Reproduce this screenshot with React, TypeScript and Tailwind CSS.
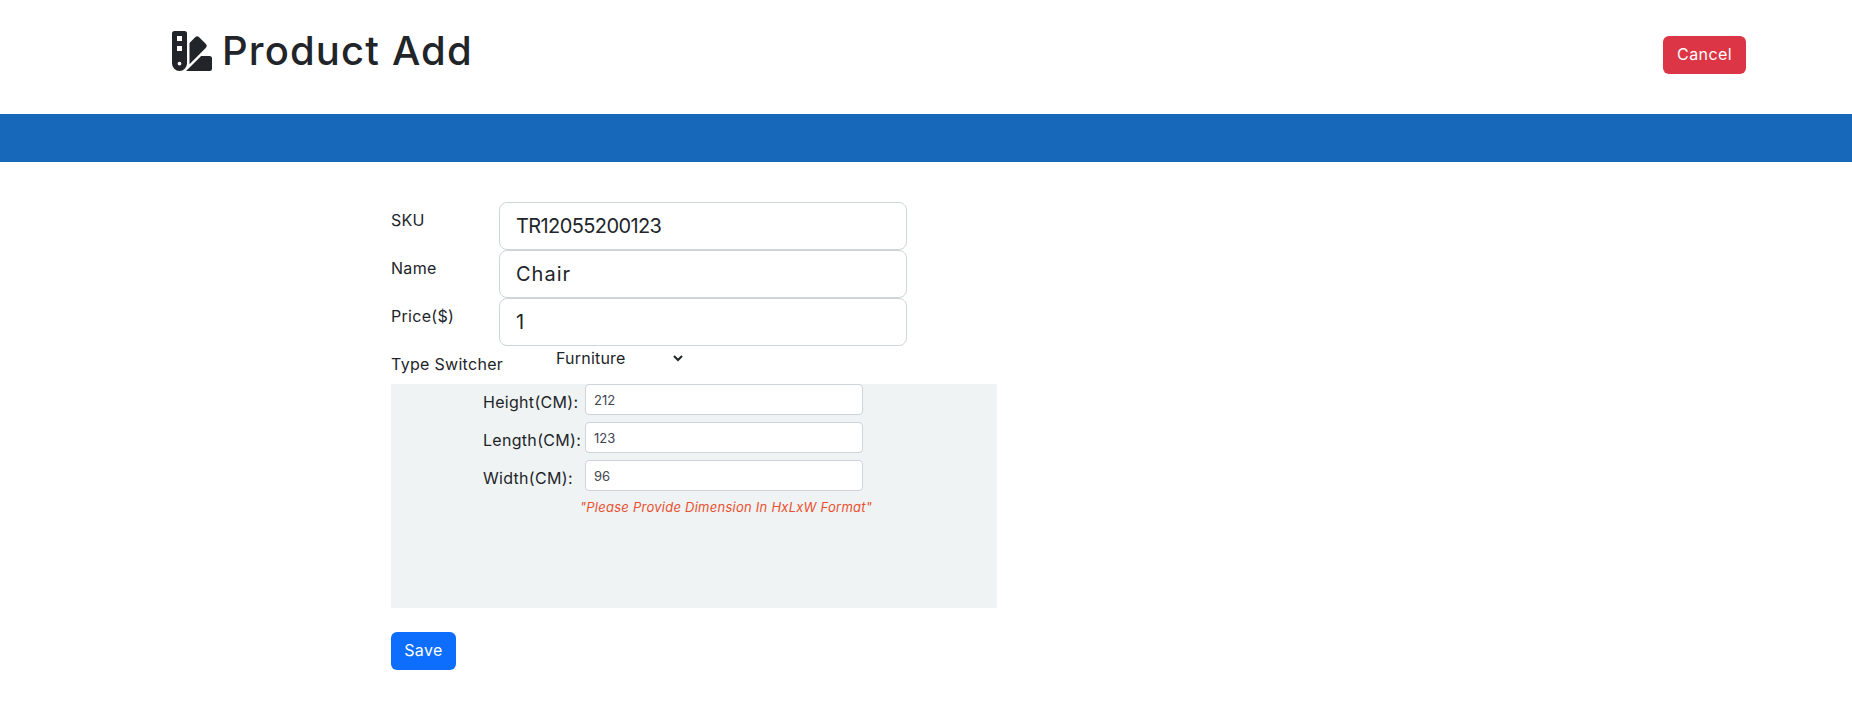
import { FaSwatchbook } from "react-icons/fa";

const fields = [
  { label: "SKU", value: "TR12055200123", spacing: "tracking-[-0.6px]" },
  { label: "Name", value: "Chair", spacing: "tracking-[1px]" },
  { label: "Price($)", value: "1", spacing: "" },
];

const dimensions = [
  { label: "Height(CM):", value: "212" },
  { label: "Length(CM):", value: "123" },
  { label: "Width(CM):", value: "96" },
];

export default function App() {
  return (
    <div className="min-h-[702px] bg-white font-['Inter',sans-serif] text-[#212529]">
      {/* Header */}
      <header className="flex h-[114px] justify-between pl-[172px] pr-[106px]">
        <div className="flex h-[102px] items-center gap-[10px]">
          <FaSwatchbook className="text-[40px]" />
          <h1 className="text-[40px] font-[450] tracking-[1.15px]">Product Add</h1>
        </div>
        <button className="mt-9 h-[38px] w-[83px] rounded-md bg-[#dc3545] pb-[2px] text-[16px] tracking-[0.4px] text-white">Cancel</button>
      </header>
      <div className="h-[48px] bg-[#1767bb]" />

      {/* Form */}
      <form className="w-[997px] pl-[391px] pt-10">
        {fields.map((f) => (
          <div key={f.label} className="flex h-[48px]">
            <label className="w-[108px] pt-[8px] text-[16px] leading-[21px] tracking-[0.3px]">{f.label}</label>
            <input
              defaultValue={f.value}
              className={`h-[48px] w-[408px] rounded-lg border border-[#ced4da] bg-white px-4 text-[20px] text-[#212529] ${f.spacing}`}
            />
          </div>
        ))}
        <div className="flex h-[38px]">
          <label className="w-[161px] pt-[8px] text-[16px] leading-[21px] tracking-[0.3px]">Type Switcher</label>
          <select className="h-[24px] w-[134px] bg-white text-[16px] tracking-[0.2px]" defaultValue="Furniture">
            <option>Furniture</option>
            <option>DVD</option>
            <option>Book</option>
          </select>
        </div>

        <div className="h-[224px] bg-[#f0f3f4] pl-[92px]">
          <div className="flex flex-col gap-[7px]">
            {dimensions.map((d) => (
              <div key={d.label} className="flex h-[31px]">
                <label className="w-[102px] pt-[6px] text-[16px] leading-[24px] tracking-[0.3px]">{d.label}</label>
                <input
                  defaultValue={d.value}
                  className="h-[31px] w-[278px] rounded border border-[#ced4da] bg-white px-2 text-[13px] text-[#3f4650]"
                />
              </div>
            ))}
          </div>
          <p className="mt-[7px] pl-[97px] text-[13px] italic tracking-[0.25px] text-[#e8512f]">"Please Provide Dimension In HxLxW Format"</p>
        </div>

        <button className="mt-6 h-[38px] w-[65px] rounded-md bg-[#0d6efd] pb-[2px] text-[16px] tracking-[0.4px] text-white">Save</button>
      </form>
    </div>
  );
}
